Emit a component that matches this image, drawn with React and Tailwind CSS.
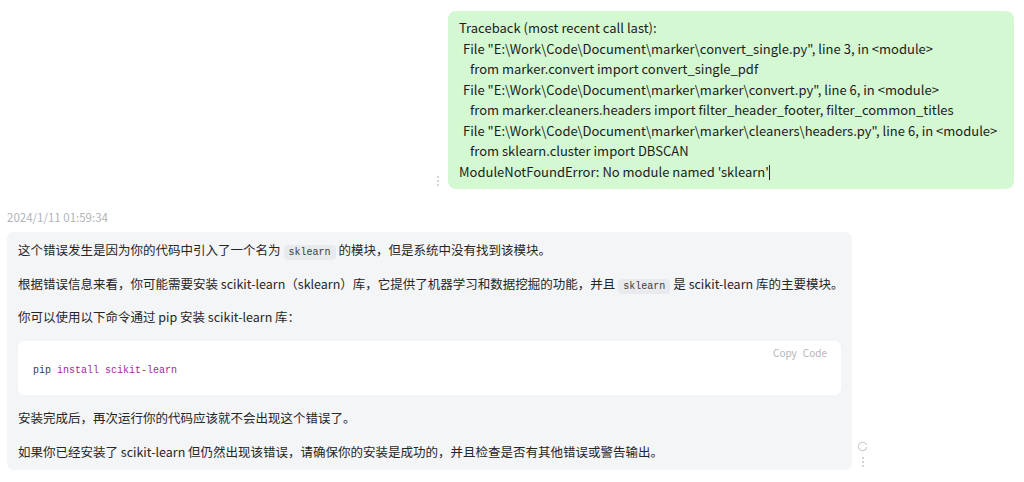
import React from "react";

const traceLines = [
  { text: "Traceback (most recent call last):", indent: "" },
  { text: 'File "E:\\Work\\Code\\Document\\marker\\convert_single.py", line 3, in <module>', indent: "pl-[4px]" },
  { text: "from marker.convert import convert_single_pdf", indent: "pl-[11px]" },
  { text: 'File "E:\\Work\\Code\\Document\\marker\\marker\\convert.py", line 6, in <module>', indent: "pl-[4px]" },
  { text: "from marker.cleaners.headers import filter_header_footer, filter_common_titles", indent: "pl-[11px]" },
  { text: 'File "E:\\Work\\Code\\Document\\marker\\marker\\cleaners\\headers.py", line 6, in <module>', indent: "pl-[4px]" },
  { text: "from sklearn.cluster import DBSCAN", indent: "pl-[11px]" },
];

const sans = "font-['Noto_Sans_CJK_SC','Noto_Sans',sans-serif]";
const mono = "font-['Liberation_Mono','DejaVu_Sans_Mono',monospace]";

// small vertical "more" dots next to each message
const Dots = () => (
  <div className="flex flex-col gap-[2px]">
    <span className="block w-[2px] h-[2px] rounded-full bg-[#c4c7cc]" />
    <span className="block w-[2px] h-[2px] rounded-full bg-[#c4c7cc]" />
    <span className="block w-[2px] h-[2px] rounded-full bg-[#c4c7cc]" />
  </div>
);

const InlineCode = ({ children }) => (
  <code className={`${mono} text-[10px] leading-[12px] bg-[#e9eaed] text-[#3a3a3a] rounded-[4px] px-[5px] py-[2px] mx-[3px]`}>
    {children}
  </code>
);

export default function App() {
  return (
    <div className={`${sans} w-[1024px] h-[482px] bg-white overflow-hidden flex flex-col`}>
      {/* user message */}
      <div className="flex justify-end items-end gap-[9px] pt-[11px] pr-[10px]">
        <div className="pb-[3px]">
          <Dots />
        </div>
        <div className="w-[566px] bg-[#d3f8d2] rounded-[8px] px-[11px] py-[7px] text-[13px] leading-[20.5px] text-[#1c1c1c]">
          {traceLines.map((l, i) => (
            <div key={i} className={l.indent}>
              {l.text}
            </div>
          ))}
          <div>
            ModuleNotFoundError: No module named 'sklearn'
            <span className="inline-block w-[1px] h-[15px] bg-[#222] align-[-3px]" />
          </div>
        </div>
      </div>

      {/* timestamp */}
      <div className="mt-[21px] pl-[7px] text-[11.5px] leading-[14px] text-[#b0b3b8]">2024/1/11 01:59:34</div>

      {/* assistant message */}
      <div className="flex items-end gap-[5px] pl-[7px] mt-[8px]">
        <div className="w-[845px] bg-[#f4f5f7] rounded-[7px] px-[11px] pt-[8px] pb-[8px] text-[12.5px] leading-[20px] text-[#262626] flex flex-col gap-[13.5px]">
          <p>
            这个错误发生是因为你的代码中引入了一个名为<InlineCode>sklearn</InlineCode>的模块，但是系统中没有找到该模块。
          </p>
          <p className="whitespace-nowrap">
            根据错误信息来看，你可能需要安装 scikit-learn（sklearn）库，它提供了机器学习和数据挖掘的功能，并且<InlineCode>sklearn</InlineCode>是 scikit-learn 库的主要模块。
          </p>
          <p>你可以使用以下命令通过 pip 安装 scikit-learn 库：</p>
          <div className="bg-white rounded-[7px] pt-[5px] pb-[17px] pl-[15px] pr-[14px]">
            <div className="flex justify-end gap-[6px] text-[10px] leading-[14px] text-[#b3b6ba]">
              <span>Copy</span>
              <span>Code</span>
            </div>
            <pre className={`${mono} mt-[4px] text-[10px] leading-[14px]`}>
              <span className="text-[#383a42]">pip</span>{" "}
              <span className="text-[#a626a4]">install scikit-learn</span>
            </pre>
          </div>
          <p>安装完成后，再次运行你的代码应该就不会出现这个错误了。</p>
          <p>如果你已经安装了 scikit-learn 但仍然出现该错误，请确保你的安装是成功的，并且检查是否有其他错误或警告输出。</p>
        </div>
        <div className="flex flex-col items-center gap-[5px] pb-[3px]">
          <svg width="11" height="11" viewBox="0 0 11 11" fill="none">
            <path d="M9.3 3.6 A4.2 4.2 0 1 0 9.6 6.3" stroke="#c9ccd0" strokeWidth="1.1" strokeLinecap="round" />
          </svg>
          <Dots />
        </div>
      </div>
    </div>
  );
}
